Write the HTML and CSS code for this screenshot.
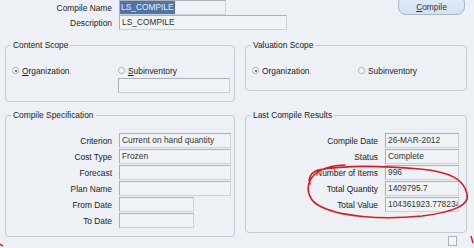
FILE: index.html
```html
<!DOCTYPE html>
<html>
<head>
<meta charset="utf-8">
<link rel="stylesheet" href="styles.css">
</head>
<body>
<div class="page">
  <div class="header">
    <div class="hrow">
      <span class="lbl">Compile Name</span>
      <div class="field w-name"><span class="hl">LS_COMPILE</span></div>
      <button class="btn"><u>C</u>ompile</button>
    </div>
    <div class="hrow">
      <span class="lbl">Description</span>
      <div class="field w-desc">LS_COMPILE</div>
    </div>
  </div>

  <div class="panels">
    <fieldset class="box box-left scope-left">
      <legend>Content Scope</legend>
      <div class="scope">
        <div class="opt"><span class="radio on"></span><span><u>O</u>rganization</span></div>
        <div class="opt-col">
          <div class="opt"><span class="radio"></span><span><u>S</u>ubinventory</span></div>
          <div class="field w-sub"></div>
        </div>
      </div>
    </fieldset>

    <fieldset class="box box-right scope-right">
      <legend>Valuation Scope</legend>
      <div class="scope">
        <div class="opt"><span class="radio on"></span><span>Organization</span></div>
        <div class="opt"><span class="radio"></span><span>Subinventory</span></div>
      </div>
    </fieldset>

    <fieldset class="box box-left spec">
      <legend>Compile Specification</legend>
      <div class="grid grid-left">
        <span class="lbl">Criterion</span><div class="field w-long">Current on hand quantity</div>
        <span class="lbl">Cost Type</span><div class="field w-long">Frozen</div>
        <span class="lbl">Forecast</span><div class="field w-long"></div>
        <span class="lbl">Plan Name</span><div class="field w-long"></div>
        <span class="lbl">From Date</span><div class="field w-date"></div>
        <span class="lbl">To Date</span><div class="field w-date"></div>
      </div>
    </fieldset>

    <fieldset class="box box-right results">
      <legend>Last Compile Results</legend>
      <div class="grid grid-right">
        <span class="lbl">Compile Date</span><div class="field w-res">26-MAR-2012</div>
        <span class="lbl">Status</span><div class="field w-res">Complete</div>
        <span class="lbl">Number of Items</span><div class="field w-res">996</div>
        <span class="lbl">Total Quantity</span><div class="field w-res">1409795.7</div>
        <span class="lbl">Total Value</span><div class="field w-res">104361923.778234</div>
      </div>
    </fieldset>
  </div>

  <span class="chk"></span>

  <svg class="ink" width="474" height="248" viewBox="0 0 474 248">
    <path d="M345 165 C 302 166, 302 196, 318 205 C 338 217, 382 220, 422 216 C 454 212, 470 205, 467 194 C 464 180, 452 172, 420 169 C 385 166, 345 165, 318 170 C 310 173, 308 179, 310 184"
      fill="none" stroke="#d81c24" stroke-width="1.6" stroke-linecap="round"/>
    <path d="M471 236 L 473 243" stroke="#d81c24" stroke-width="1.5" fill="none"/>
    <path d="M0 244 L 3 246" stroke="#d81c24" stroke-width="1.5" fill="none"/>
  </svg>
</div>
</body>
</html>
```

FILE: styles.css
```css
html, body {
  margin: 0;
  padding: 0;
}
body {
  background: #edf1f5;
  font-family: "Liberation Sans", Arial, sans-serif;
  font-size: 8.4px;
  color: #222;
  width: 474px;
  height: 248px;
  overflow: hidden;
}
.page {
  position: relative;
  width: 474px;
  height: 248px;
}
u {
  text-decoration: underline;
  text-underline-offset: 1px;
}

/* header */
.header {
  display: flex;
  flex-direction: column;
}
.hrow {
  display: flex;
  align-items: center;
  height: 15px;
  gap: 7px;
}
.header .lbl {
  width: 112px;
  text-align: right;
}
.btn {
  margin-left: auto;
  margin-right: 9px;
  width: 67px;
  height: 20px;
  margin-top: -5px;
  border: 1px solid #a6b7c9;
  border-radius: 8px;
  background: linear-gradient(#e2ecf6, #d3e2f1);
  font-family: "Liberation Sans", Arial, sans-serif;
  font-size: 8.4px;
  color: #333;
  padding: 4px 0 0 0;
}

/* fields */
.field {
  box-sizing: border-box;
  height: 15px;
  border: 1px solid;
  border-color: #a8b0ba #cbd1d9 #cbd1d9 #a8b0ba;
  background: #f0f3f6;
  padding: 0 2px;
  line-height: 13px;
  white-space: nowrap;
  overflow: hidden;
  color: #333;
}
.w-name { width: 107px; padding: 0; }
.w-desc { width: 168px; }
.w-sub { width: 112px; }
.w-long { width: 112px; }
.w-date { width: 75px; }
.w-res { width: 74px; }
.hl {
  display: inline-block;
  background: #5174a8;
  color: #e6edf6;
  padding: 0 1px;
  line-height: 13px;
}

/* panels */
.panels {
  display: grid;
  grid-template-columns: 230px 222px;
  column-gap: 10px;
  row-gap: 8px;
  padding-left: 5px;
  margin-top: 10px;
  align-items: start;
}
.box {
  margin: 0;
  padding: 0;
  border: 1px solid #c4cad3;
  border-radius: 4px;
  min-width: 0;
}
.box legend {
  margin-left: 5px;
  padding: 0 2px;
  line-height: 10px;
  color: #222;
}
.scope {
  display: flex;
  padding-top: 15px;
}
.scope-left .scope { padding-bottom: 8px; }
.scope-right .scope { padding-bottom: 14px; }
.scope-left .scope > .opt { width: 106px; padding-left: 6px; }
.scope-right .scope > .opt:first-child { width: 106px; padding-left: 6px; }
.opt-col {
  display: flex;
  flex-direction: column;
  gap: 2px;
}
.opt {
  display: flex;
  align-items: center;
  gap: 3px;
  height: 11px;
}
.radio {
  box-sizing: border-box;
  width: 7px;
  height: 7px;
  border-radius: 50%;
  border: 1px solid #a3acb7;
  background: #f7f9fb;
  position: relative;
}
.radio.on::after {
  content: "";
  position: absolute;
  left: 1.5px;
  top: 1.5px;
  width: 2px;
  height: 2px;
  border-radius: 50%;
  background: #444;
}

.grid {
  display: grid;
  column-gap: 7px;
  row-gap: 1px;
  align-items: center;
  padding-top: 13px;
}
.grid .lbl { text-align: right; }
.grid-left {
  grid-template-columns: 106px auto;
  padding-bottom: 8px;
}
.grid-right {
  grid-template-columns: 132px auto;
  padding-bottom: 20px;
}

.chk {
  position: absolute;
  left: 448px;
  top: 236px;
  width: 7px;
  height: 8px;
  border: 1px solid #aab2bc;
  background: #f3f5f8;
}
.ink {
  position: absolute;
  left: 0;
  top: 0;
  pointer-events: none;
}
```
